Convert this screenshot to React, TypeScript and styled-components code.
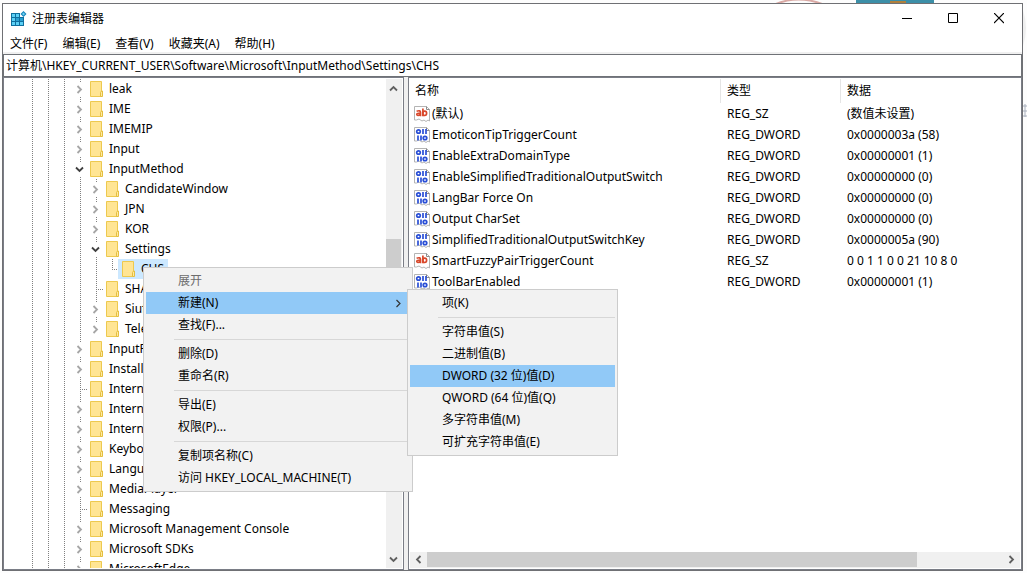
import React from "react";
import styled, { createGlobalStyle, css } from "styled-components";

const Global = createGlobalStyle`
  * { box-sizing: border-box; }
  body { margin: 0; background: #fff; overflow: hidden; }
  body, button, input { font-family: "Noto Sans", "Noto Sans CJK SC", sans-serif; font-size: 12px; color: #000; }
  button { border: 0; padding: 0; margin: 0; background: transparent; text-align: left; }
  ul { list-style: none; margin: 0; padding: 0; }
`;

const Desktop = styled.div`
  position: relative;
  height: 100vh;
  display: flex;
  padding: 3px 4px 2px 2px;
  background: #fdfdfd;
`;

const Backdrop = styled.svg`
  position: absolute;
  top: 0;
  right: 0;
`;

const Window = styled.main`
  position: relative;
  flex: 1;
  min-width: 0;
  display: flex;
  flex-direction: column;
  background: #fff;
  border: 1px solid #6f7074;
`;

const TitleBar = styled.header`
  display: flex;
  align-items: center;
  height: 29px;
  flex: none;
  padding-left: 8px;
`;

const Title = styled.h1`
  flex: 1;
  margin: 0 0 0 5px;
  font-size: 12px;
  line-height: 16px;
  font-weight: 400;
`;

const CaptionButton = styled.button`
  width: 46px;
  height: 29px;
  display: grid;
  place-items: center;
`;

const MenuBar = styled.nav`
  display: flex;
  gap: 15px;
  height: 21px;
  flex: none;
  padding: 2px 7px 0;
  border-bottom: 2px solid #f0f0f0;
`;

const MenuBarItem = styled.button`
  line-height: 17px;
`;

const Address = styled.input`
  flex: none;
  height: 23px;
  width: 100%;
  padding: 0 2px 1px;
  border: 1px solid #6f7277;
  outline: none;
  border-radius: 0;
`;

const Panes = styled.div`
  flex: 1;
  min-height: 0;
  display: flex;
  gap: 4px;
  background: #f0f0f0;
`;

const Pane = styled.section`
  display: flex;
  min-width: 0;
  background: #fff;
  border: 1px solid #7a7d86;
  padding: 1px;
`;

const TreePane = styled(Pane)`
  flex: 0 0 401px;
`;

const ListPane = styled(Pane)`
  flex: 1;
  flex-direction: column;
`;

const Tree = styled.ul`
  flex: 1;
  overflow: hidden;
  padding-left: 19px;
`;

const TreeRow = styled.li`
  display: flex;
  height: 20px;
`;

const dots = css`
  background-image: repeating-linear-gradient(to bottom, #808080 0 1px, transparent 1px 2px);
  background-repeat: no-repeat;
  background-position: 8px 0;
`;

const Guide = styled.span<{ $half?: boolean }>`
  display: flex;
  justify-content: flex-end;
  align-items: center;
  flex: none;
  width: 16px;
  height: 20px;
  ${dots}
  background-size: 1px ${(p) => (p.$half ? "11px" : "20px")};
`;

const Branch = styled.span`
  width: 6px;
  height: 1px;
  background: repeating-linear-gradient(to right, #808080 0 1px, transparent 1px 2px);
`;

const Expander = styled.button`
  width: 16px;
  height: 14px;
  display: flex;
  align-items: center;
  padding-left: 3px;
  background: #fff;
`;

const TreeItem = styled.span<{ $selected?: boolean }>`
  display: flex;
  align-items: center;
  gap: 5px;
  margin-left: -2px;
  padding: 0 4px 0 2px;
  line-height: 20px;
  white-space: nowrap;
  background: ${(p) => (p.$selected ? "#cce8ff" : "transparent")};
`;

const VScroll = styled.div`
  flex: none;
  width: 16px;
  display: flex;
  flex-direction: column;
  background: #f0f0f0;
`;

const HScroll = styled.div`
  flex: none;
  height: 16px;
  display: flex;
  background: #f0f0f0;
`;

const ScrollButton = styled.button`
  flex: none;
  width: 15px;
  height: 18px;
  display: grid;
  place-items: center;
`;

const SideScrollButton = styled(ScrollButton)`
  width: 17px;
  height: 15px;
`;

const VTrack = styled.div`
  flex: 1;
  padding-top: 142px;
`;

const VThumb = styled.div`
  width: 15px;
  height: 120px;
  background: #cdcdcd;
`;

const HTrack = styled.div`
  flex: 1;
`;

const HThumb = styled.div`
  width: 85%;
  height: 15px;
  background: #cdcdcd;
`;

const TableArea = styled.div`
  flex: 1;
  min-height: 0;
  overflow: hidden;
`;

const Table = styled.table`
  width: 100%;
  table-layout: fixed;
  border-collapse: separate;
  border-spacing: 0;
`;

const HeadCell = styled.th<{ $w?: number }>`
  width: ${(p) => (p.$w ? p.$w + "px" : "auto")};
  height: 24px;
  padding: 0 6px;
  font-weight: 400;
  line-height: 20px;
  text-align: left;
  border-right: ${(p) => (p.$w ? "1px solid #e5e5e5" : "0")};
  &:first-child { padding-left: 5px; }
`;

const Cell = styled.td`
  height: 21px;
  padding: 0 0 0 6px;
  line-height: 20px;
  white-space: nowrap;
  &:first-child { padding-left: 4px; }
`;

const ValueName = styled.span`
  display: flex;
  align-items: center;
  gap: 2px;
`;

const Menu = styled.ul<{ $w: number }>`
  position: absolute;
  z-index: 2;
  width: ${(p) => p.$w}px;
  padding: 2px;
  background: #f2f2f2;
  border: 1px solid #ccc;
`;

const ContextMenu = styled(Menu)`
  left: 143px;
  top: 267px;
`;

const SubMenu = styled(Menu)`
  left: calc(100% - 3px);
  top: -3px;
`;

const MenuRow = styled.li`
  position: relative;
`;

const MenuButton = styled.button<{ $active?: boolean }>`
  display: flex;
  align-items: center;
  justify-content: space-between;
  width: 100%;
  height: 22px;
  padding: 0 7px 0 32px;
  line-height: 20px;
  white-space: nowrap;
  background: ${(p) => (p.$active ? "#91c9f7" : "transparent")};
  &:disabled { color: #6d6d6d; }
`;

const Separator = styled.li`
  height: 1px;
  margin: 3px 0 3px 28px;
  background: #d7d7d7;
`;

const Chevron = ({ dir, color = "#606060", weight = 1.8 }: { dir: "up" | "down" | "left" | "right"; color?: string; weight?: number }) => {
  const d = {
    up: "M1 6.5 4.5 3 8 6.5",
    down: "M1 2.5 4.5 6 8 2.5",
    left: "M6.5 1 3 4.5 6.5 8",
    right: "M2.5 1 6 4.5 2.5 8",
  }[dir];
  return (
    <svg width="9" height="9" viewBox="0 0 9 9" aria-hidden="true">
      <path d={d} fill="none" stroke={color} strokeWidth={weight} />
    </svg>
  );
};

const Folder = () => (
  <svg width="16" height="16" viewBox="0 0 16 16" aria-hidden="true">
    <path d="M2.5.5h11v15h-11z" fill="#ffe594" stroke="#edc94f" />
    <path d="M12.500 15.500v-4l1-1.500h1v5.500z" fill="#ffe9a2" stroke="#e4bf3f" />
  </svg>
);

const RegeditIcon = () => (
  <svg width="16" height="16" viewBox="0 0 16 16" aria-hidden="true">
    <path d="M0 2h9v4h4v9H0z" fill="#0f6f9e" />
    <path d="M1 3h3v3H1zM5 3h3v3H5zM1 7h3v3H1zM5 11h3v3H5zM1 11h3v3H1zM9 11h3v3H9z" fill="#5cd0f5" />
    <path d="M5 7h3v3H5zM9 7h3v3H9z" fill="#2a9fd0" />
    <path d="m12.500 0 3 3-3 3-3-3z" fill="#1585bb" />
    <path d="m12.500 1.500 1.500 1.500-1.500 1.500-1.500-1.500z" fill="#6fd0f2" />
  </svg>
);

const Page = () => (
  <>
    <path d="M.5.5h12l3 3v11.500l-1.500-1-2 1.500-2-1.500-2 1-3-2-2.500 1H.5z" fill="#fff" stroke="#b4b4b4" />
    <path d="M12.500.5v3h3" fill="none" stroke="#8c8c8c" />
  </>
);

const StringIcon = () => (
  <svg width="16" height="16" viewBox="0 0 16 16" aria-hidden="true">
    <Page />
    <g fill="none" stroke="#d9482b" strokeWidth="1.700">
      <path d="M2.600 5.200q3.900-1.300 3.900 1.300V10.300M6.500 7.300H4.500Q2.700 7.400 2.800 8.600 3.200 10.300 6.500 8.800" />
      <path d="M8.900 2.500v7.800" />
      <ellipse cx="10.700" cy="7.300" rx="1.900" ry="2.200" />
    </g>
  </svg>
);

const BinaryIcon = () => (
  <svg width="16" height="16" viewBox="0 0 16 16" aria-hidden="true">
    <Page />
    <g fill="none" stroke="#2a4fd6" strokeWidth="1.700">
      <ellipse cx="4.500" cy="4.500" rx="1.800" ry="1.700" />
      <path d="M9 2v5M12 2v5M4 8.500v5M7 8.500v5" />
      <ellipse cx="11" cy="11" rx="1.800" ry="1.700" />
    </g>
  </svg>
);

type Node = { name: string; level: number; open?: boolean; leaf?: boolean; last?: boolean; selected?: boolean };

const nodes: Node[] = [
  { name: "leak", level: 0 },
  { name: "IME", level: 0 },
  { name: "IMEMIP", level: 0 },
  { name: "Input", level: 0 },
  { name: "InputMethod", level: 0, open: true },
  { name: "CandidateWindow", level: 1 },
  { name: "JPN", level: 1 },
  { name: "KOR", level: 1 },
  { name: "Settings", level: 1, open: true },
  { name: "CHS", level: 2, leaf: true, last: true, selected: true },
  { name: "SHARED", level: 1, leaf: true },
  { name: "Siuf", level: 1 },
  { name: "Telemetry", level: 1, last: true },
  { name: "InputPersonalization", level: 0 },
  { name: "Installer", level: 0 },
  { name: "Internet Connection", level: 0, leaf: true },
  { name: "Internet Explorer", level: 0 },
  { name: "Internet Mail", level: 0 },
  { name: "Keyboard", level: 0 },
  { name: "Language", level: 0 },
  { name: "MediaPlayer", level: 0 },
  { name: "Messaging", level: 0, leaf: true },
  { name: "Microsoft Management Console", level: 0 },
  { name: "Microsoft SDKs", level: 0 },
  { name: "MicrosoftEdge", level: 0 },
];

const values: [string, string, string][] = [
  ["(默认)", "REG_SZ", "(数值未设置)"],
  ["EmoticonTipTriggerCount", "REG_DWORD", "0x0000003a (58)"],
  ["EnableExtraDomainType", "REG_DWORD", "0x00000001 (1)"],
  ["EnableSimplifiedTraditionalOutputSwitch", "REG_DWORD", "0x00000000 (0)"],
  ["LangBar Force On", "REG_DWORD", "0x00000000 (0)"],
  ["Output CharSet", "REG_DWORD", "0x00000000 (0)"],
  ["SimplifiedTraditionalOutputSwitchKey", "REG_DWORD", "0x0000005a (90)"],
  ["SmartFuzzyPairTriggerCount", "REG_SZ", "0 0 1 1 0 0 21 10 8 0"],
  ["ToolBarEnabled", "REG_DWORD", "0x00000001 (1)"],
];

const TreeNode = ({ node }: { node: Node }) => (
  <TreeRow>
    {Array.from({ length: 3 + node.level }, (_, i) => (
      <Guide key={i} />
    ))}
    <Guide $half={node.last}>
      {node.leaf ? (
        <Branch />
      ) : (
        <Expander aria-label={`${node.open ? "收起" : "展开"} ${node.name}`}>
          <Chevron dir={node.open ? "down" : "right"} color={node.open ? "#404040" : "#a6a6a6"} />
        </Expander>
      )}
    </Guide>
    <TreeItem $selected={node.selected}>
      <Folder />
      {node.name}
    </TreeItem>
  </TreeRow>
);

export default function App() {
  return (
    <Desktop>
      <Global />
      <Backdrop width="430" height="240" viewBox="597 0 430 240" aria-hidden="true">
        <path d="M776 4q22-9 46 0" fill="none" stroke="#d9a9a4" strokeWidth="2" />
        <path d="M856 0h78v3h-78z" fill="#3c8fa8" />
        <path d="M890 1h16v2h-16z" fill="#b0803c" />
        <path d="M1023 10q6 18 0 36z" fill="#efefef" />
        <path d="M1023 106h4M1025 104v13M1023 111h4M1023 116h4" stroke="#a9b0bd" />
      </Backdrop>
      <Window>
        <TitleBar>
          <RegeditIcon />
          <Title>注册表编辑器</Title>
          <CaptionButton aria-label="最小化">
            <svg width="10" height="11"><path d="M0 5.500h10" stroke="#000" /></svg>
          </CaptionButton>
          <CaptionButton aria-label="最大化">
            <svg width="10" height="11"><path d="M.5.5h9v9h-9z" fill="none" stroke="#000" /></svg>
          </CaptionButton>
          <CaptionButton aria-label="关闭">
            <svg width="10" height="11"><path d="m0 0 10 10M10 0 0 10" stroke="#000" strokeWidth="1.200" /></svg>
          </CaptionButton>
        </TitleBar>
        <MenuBar>
          {["文件(F)", "编辑(E)", "查看(V)", "收藏夹(A)", "帮助(H)"].map((t) => (
            <MenuBarItem key={t}>{t}</MenuBarItem>
          ))}
        </MenuBar>
        <Address
          aria-label="地址"
          defaultValue="计算机\HKEY_CURRENT_USER\Software\Microsoft\InputMethod\Settings\CHS"
        />
        <Panes>
          <TreePane>
            <Tree>
              {nodes.map((n) => (
                <TreeNode key={n.name} node={n} />
              ))}
            </Tree>
            <VScroll>
              <ScrollButton aria-label="向上滚动"><Chevron dir="up" /></ScrollButton>
              <VTrack><VThumb /></VTrack>
              <ScrollButton aria-label="向下滚动"><Chevron dir="down" /></ScrollButton>
            </VScroll>
          </TreePane>
          <ListPane>
            <TableArea>
              <Table>
                <thead>
                  <tr>
                    <HeadCell $w={311}>名称</HeadCell>
                    <HeadCell $w={120}>类型</HeadCell>
                    <HeadCell>数据</HeadCell>
                  </tr>
                </thead>
                <tbody>
                  {values.map(([name, type, data]) => (
                    <tr key={name}>
                      <Cell>
                        <ValueName>
                          {type === "REG_SZ" ? <StringIcon /> : <BinaryIcon />}
                          {name}
                        </ValueName>
                      </Cell>
                      <Cell>{type}</Cell>
                      <Cell>{data}</Cell>
                    </tr>
                  ))}
                </tbody>
              </Table>
            </TableArea>
            <HScroll>
              <SideScrollButton aria-label="向左滚动"><Chevron dir="left" /></SideScrollButton>
              <HTrack><HThumb /></HTrack>
              <SideScrollButton aria-label="向右滚动"><Chevron dir="right" /></SideScrollButton>
            </HScroll>
          </ListPane>
        </Panes>
      </Window>
      <ContextMenu $w={270}>
        <MenuRow><MenuButton disabled>展开</MenuButton></MenuRow>
        <MenuRow>
          <MenuButton $active>新建(N)<Chevron dir="right" color="#333" weight={1.2} /></MenuButton>
          <SubMenu $w={211}>
            <MenuRow><MenuButton>项(K)</MenuButton></MenuRow>
            <Separator />
            <MenuRow><MenuButton>字符串值(S)</MenuButton></MenuRow>
            <MenuRow><MenuButton>二进制值(B)</MenuButton></MenuRow>
            <MenuRow><MenuButton $active>DWORD (32 位)值(D)</MenuButton></MenuRow>
            <MenuRow><MenuButton>QWORD (64 位)值(Q)</MenuButton></MenuRow>
            <MenuRow><MenuButton>多字符串值(M)</MenuButton></MenuRow>
            <MenuRow><MenuButton>可扩充字符串值(E)</MenuButton></MenuRow>
          </SubMenu>
        </MenuRow>
        <MenuRow><MenuButton>查找(F)...</MenuButton></MenuRow>
        <Separator />
        <MenuRow><MenuButton>删除(D)</MenuButton></MenuRow>
        <MenuRow><MenuButton>重命名(R)</MenuButton></MenuRow>
        <Separator />
        <MenuRow><MenuButton>导出(E)</MenuButton></MenuRow>
        <MenuRow><MenuButton>权限(P)...</MenuButton></MenuRow>
        <Separator />
        <MenuRow><MenuButton>复制项名称(C)</MenuButton></MenuRow>
        <MenuRow><MenuButton>访问 HKEY_LOCAL_MACHINE(T)</MenuButton></MenuRow>
      </ContextMenu>
    </Desktop>
  );
}
